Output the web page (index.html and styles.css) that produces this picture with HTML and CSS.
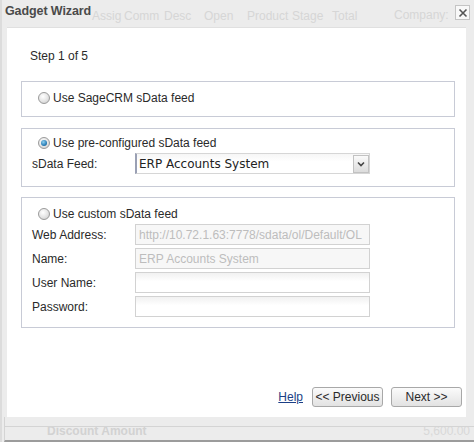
FILE: index.html
```html
<!DOCTYPE html>
<html>
<head>
<meta charset="utf-8">
<title>Gadget Wizard</title>
<link rel="stylesheet" href="styles.css">
</head>
<body>
<div class="window">
  <div class="behind-top">
    <span class="c1">Assig</span><span class="c2">Comm</span><span class="c3">Desc</span><span class="c4">Open</span><span class="c5">Product</span><span class="c6">Stage</span><span class="c7">Total</span><span class="c8">Company:</span>
  </div>
  <div class="titlebar">
    <span class="title">Gadget Wizard</span>
    <span class="close">
      <svg width="10" height="10" viewBox="0 0 10 10"><path d="M1.5 1.5 L8.5 8.5 M8.5 1.5 L1.5 8.5" stroke="#555" stroke-width="1.6" fill="none"/></svg>
    </span>
  </div>
  <div class="panel">
    <div class="step">Step 1 of 5</div>

    <div class="box box1">
      <label class="opt"><span class="radio"></span>Use SageCRM sData feed</label>
    </div>

    <div class="box box2">
      <label class="opt"><span class="radio on"></span>Use pre-configured sData feed</label>
      <div class="row">
        <span class="lbl">sData Feed:</span>
        <div class="select">
          <span class="sel-text">ERP Accounts System</span>
          <span class="sel-btn">
            <svg width="8" height="6" viewBox="0 0 8 6"><path d="M1 1.5 L4 4.5 L7 1.5" stroke="#444" stroke-width="1.6" fill="none"/></svg>
          </span>
        </div>
      </div>
    </div>

    <div class="box box3">
      <label class="opt"><span class="radio"></span>Use custom sData feed</label>
      <div class="grid">
        <span class="lbl">Web Address:</span>
        <div class="input disabled">http://10.72.1.63:7778/sdata/ol/Default/OL</div>
        <span class="lbl">Name:</span>
        <div class="input disabled">ERP Accounts System</div>
        <span class="lbl">User Name:</span>
        <div class="input"></div>
        <span class="lbl">Password:</span>
        <div class="input"></div>
      </div>
    </div>

    <div class="actions">
      <a class="help" href="#">Help</a>
      <span class="btn">&lt;&lt; Previous</span>
      <span class="btn">Next &gt;&gt;</span>
    </div>
  </div>
  <div class="bottom">
    <span class="faded-bold">Discount Amount</span>
    <span class="faded-num">5,600.00</span>
  </div>
</div>
</body>
</html>
```

FILE: styles.css
```css
* { box-sizing: border-box; }
html, body { margin: 0; padding: 0; }
body {
  font-family: "Liberation Sans", Arial, sans-serif;
  font-size: 12px;
  color: #2a2a2a;
  background: #ebebeb;
}
.window {
  position: relative;
  width: 474px;
  height: 442px;
  background: #ececec;
  overflow: hidden;
  border-left: 2px solid #dcdcdc;
}
.behind-top {
  position: absolute;
  left: 0;
  top: 9px;
  width: 474px;
  height: 16px;
  color: #d6d6d6;
  font-size: 12px;
  white-space: nowrap;
}
.behind-top span { position: absolute; top: 0; }
.behind-top .c1 { left: 90px; }
.behind-top .c2 { left: 122px; }
.behind-top .c3 { left: 162px; }
.behind-top .c4 { left: 202px; }
.behind-top .c5 { left: 245px; }
.behind-top .c6 { left: 290px; }
.behind-top .c7 { left: 330px; }
.behind-top .c8 { left: 392px; top: -1px; font-size: 12px; }

.titlebar {
  position: relative;
  height: 27px;
  display: flex;
  align-items: flex-start;
  justify-content: space-between;
  padding: 4px 4px 0 3px;
}
.title {
  font-weight: bold;
  font-size: 12.5px;
  color: #4a4a4a;
  letter-spacing: -0.1px;
}
.close {
  width: 15px;
  height: 15px;
  margin-top: 1px;
  border: 1px solid #c4c4c4;
  background: #f8f8f8;
  display: flex;
  align-items: center;
  justify-content: center;
}
.panel {
  position: relative;
  margin-left: 5px;
  width: 459px;
  height: 390px;
  background: #fff;
  border-top: 1px solid #e0e0e0;
  display: flex;
  flex-direction: column;
  padding: 0 4px 10px 14px;
}
.step {
  margin: 21px 0 0 9px;
  height: 15px;
  line-height: 15px;
}
.box {
  width: 434px;
  border: 1px solid #c8cbd6;
}
.box1 {
  margin-top: 17px;
  height: 36px;
  padding-top: 9px;
}
.box2 {
  margin-top: 11px;
  height: 59px;
  padding-top: 7px;
}
.box3 {
  margin-top: 10px;
  height: 131px;
  padding-top: 9px;
}
.opt {
  display: flex;
  align-items: center;
  height: 14px;
  padding-left: 16px;
  gap: 3px;
  font-size: 12px;
  color: #2a2a2a;
}
.radio {
  width: 12px;
  height: 12px;
  border-radius: 50%;
  border: 1px solid #9a9a9a;
  background: radial-gradient(circle at 40% 35%, #ffffff 0%, #e4e4e4 55%, #c6c6c6 100%);
  position: relative;
}
.radio.on::after {
  content: "";
  position: absolute;
  left: 2px;
  top: 2px;
  width: 6px;
  height: 6px;
  border-radius: 50%;
  background: radial-gradient(circle at 40% 35%, #8fd0f0 0%, #2a7fb8 60%, #16507a 100%);
}
.row {
  display: flex;
  align-items: center;
  margin-top: 3px;
  padding-left: 10px;
}
.lbl {
  width: 103px;
  font-size: 12px;
  color: #2a2a2a;
}
.select {
  width: 235px;
  height: 21px;
  border: 1px solid #d6d6d6;
  border-left: 2px solid #9aa0b4;
  background: linear-gradient(#f6f6f6, #ffffff 40%);
  display: flex;
  align-items: center;
  justify-content: space-between;
  padding-left: 2px;
}
.sel-text {
  font-family: "DejaVu Sans", Verdana, sans-serif;
  font-size: 12px;
  color: #222;
}
.sel-btn {
  width: 16px;
  height: 18px;
  border: 1px solid #c2c2c2;
  background: linear-gradient(#fafafa, #dcdcdc);
  display: flex;
  align-items: center;
  justify-content: center;
}
.grid {
  display: grid;
  grid-template-columns: 103px 235px;
  row-gap: 3px;
  align-items: center;
  padding-left: 10px;
  margin-top: 3px;
}
.input {
  height: 21px;
  border: 1px solid #d2d2d2;
  background: linear-gradient(#f1f1f1, #ffffff 45%);
  overflow: hidden;
  white-space: nowrap;
  padding: 3px 0 0 3px;
  font-size: 12px;
  line-height: 14px;
}
.input.disabled {
  color: #bdbdbd;
  background: #f7f7f7;
}
.actions {
  margin-top: auto;
  display: flex;
  justify-content: flex-end;
  align-items: center;
  gap: 8px;
}
.help {
  color: #1c3f86;
  text-decoration: underline;
  font-size: 12px;
  margin-right: 1px;
}
.btn {
  width: 71px;
  height: 20px;
  border: 1px solid #a8a8a8;
  border-radius: 3px;
  background: linear-gradient(#fbfbfb, #e2e2e2);
  display: flex;
  align-items: center;
  justify-content: center;
  font-size: 12px;
  color: #2a2a2a;
}
.bottom {
  position: relative;
  height: 25px;
  margin-left: 2px;
  border-left: 1px solid #d4d4d4;
  display: flex;
  align-items: flex-end;
  justify-content: space-between;
  padding: 0 4px 2px 42px;
  border-bottom: 2px solid #9c9c9c;
}
.bottom::before {
  content: "";
  position: absolute;
  left: 0;
  right: 0;
  top: 9px;
  border-top: 1px solid #d4d4d4;
}
.faded-bold {
  font-weight: bold;
  color: #d2d2d2;
  font-size: 12px;
}
.faded-num {
  color: #d8d8d8;
  font-size: 12px;
}
```
